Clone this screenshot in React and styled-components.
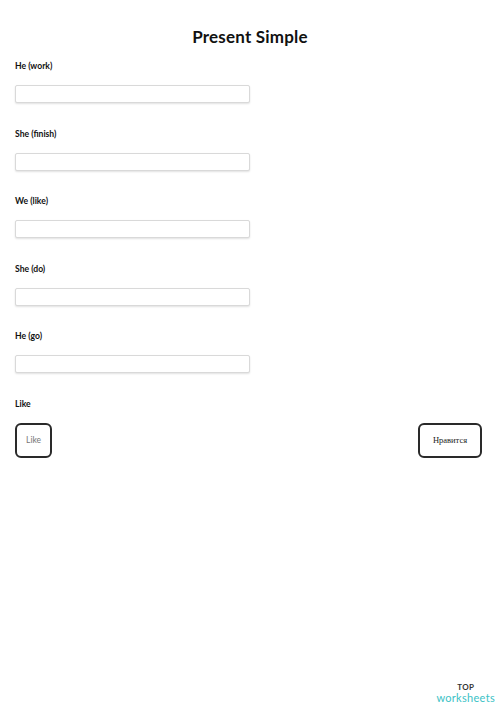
import React from 'react'
import styled, { createGlobalStyle } from 'styled-components'

const Global = createGlobalStyle`
  html, body { margin: 0; padding: 0; background: #fff; }
  body { font-family: Lato, "Noto Sans", sans-serif; color: #111; }
`

const Page = styled.div`
  position: relative;
  width: 500px;
  height: 707px;
  box-sizing: border-box;
  padding: 27px 15px 0 15px;
  overflow: hidden;
`

const Title = styled.h1`
  margin: 0 0 13px 0;
  text-align: center;
  font-size: 17px;
  line-height: 20px;
  font-weight: 700;
  color: #111;
  letter-spacing: 0.2px;
`

const Field = styled.div`
  display: flex;
  flex-direction: column;
  margin-bottom: 24.5px;
`

const Label = styled.div`
  font-size: 8.6px;
  line-height: 12px;
  font-weight: 700;
  color: #111;
  margin-bottom: 13px;
`

const Input = styled.input`
  box-sizing: border-box;
  width: 235px;
  height: 18px;
  margin: 0;
  border: 1px solid #d9d9d9;
  border-radius: 2px;
  box-shadow: 0 1px 2px rgba(0, 0, 0, 0.12);
  background: #fff;
  outline: none;
`

const ButtonRow = styled.div`
  display: flex;
  justify-content: space-between;
  padding-right: 3px;
`

const LikeButton = styled.button`
  box-sizing: border-box;
  height: 35px;
  width: ${p => p.$w}px;
  border: 2px solid #2a2a2a;
  border-radius: 6px;
  background: #fff;
  font-family: ${p => p.$muted ? 'Lato, "Noto Sans", sans-serif' : '"Liberation Serif", "DejaVu Serif", serif'};
  font-size: 8.5px;
  color: ${p => p.$muted ? '#777' : '#222'};
  padding: 0;
`

const Logo = styled.div`
  position: absolute;
  right: 5px;
  bottom: 4px;
  display: flex;
  flex-direction: column;
  align-items: center;
  gap: 1px;
  line-height: 1;
`

const LogoTop = styled.span`
  font-size: 8px;
  font-weight: 700;
  color: #333;
  letter-spacing: 0.3px;
`

const LogoBottom = styled.span`
  font-size: 11px;
  color: #3cc2c6;
  letter-spacing: 0.3px;
`

const fields = ['He (work)', 'She (finish)', 'We (like)', 'She (do)', 'He (go)']

export default function App() {
  return (
    <Page>
      <Global />
      <Title>Present Simple</Title>
      {fields.map(f => (
        <Field key={f}>
          <Label>{f}</Label>
          <Input type="text" />
        </Field>
      ))}
      <Label>Like</Label>
      <ButtonRow>
        <LikeButton $w={37} $muted>Like</LikeButton>
        <LikeButton $w={64}>Нравится</LikeButton>
      </ButtonRow>
      <Logo>
        <LogoTop>TOP</LogoTop>
        <LogoBottom>worksheets</LogoBottom>
      </Logo>
    </Page>
  )
}
